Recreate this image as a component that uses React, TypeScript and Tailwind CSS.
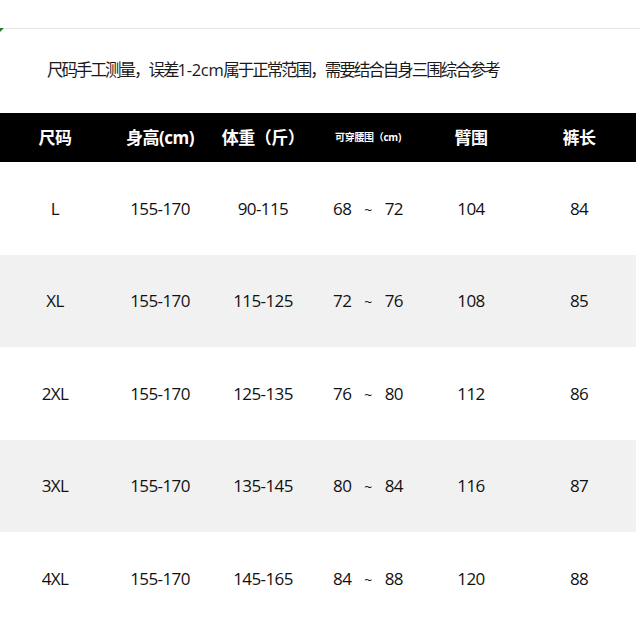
import React from 'react';

const rows = [
  { size: 'L', height: '155-170', weight: '90-115', waist: ['68', '72'], arm: '104', pants: '84' },
  { size: 'XL', height: '155-170', weight: '115-125', waist: ['72', '76'], arm: '108', pants: '85' },
  { size: '2XL', height: '155-170', weight: '125-135', waist: ['76', '80'], arm: '112', pants: '86' },
  { size: '3XL', height: '155-170', weight: '135-145', waist: ['80', '84'], arm: '116', pants: '87' },
  { size: '4XL', height: '155-170', weight: '145-165', waist: ['84', '88'], arm: '120', pants: '88' },
];

const font = { fontFamily: '"Open Sans", "Noto Sans CJK SC", sans-serif' };
const cols = 'grid grid-cols-[110px_100px_106px_104px_102px_114px]';

export default function App() {
  return (
    <div className="w-[640px] h-[640px] bg-white overflow-hidden text-[#111]" style={font}>
      <div className="h-[28px]" />
      <div className="flex items-start h-[4px]">
        <div className="w-0 h-0 border-t-[4px] border-t-[#2d7a2d] border-r-[4px] border-r-transparent" />
        <div className="flex-1 ml-[1px] h-[1px] bg-[#e6e6e6]" />
      </div>
      <div className="h-[81px] pl-[47px] pt-[28px] text-[16.5px] leading-[20px] text-[#1a1a1a] tracking-[-2px] whitespace-nowrap">
        尺码手工测量，误差<span className="tracking-[-0.3px]">1-2cm</span>属于正常范围，需要结合自身三围综合参考
      </div>
      <div className="w-[636px]">
        <div className={`${cols} h-[49px] bg-black text-white font-bold text-[17px] tracking-[-0.5px] items-center text-center`}>
          <div>尺码</div>
          <div>身高(cm)</div>
          <div>体重（斤）</div>
          <div className="text-[10px] tracking-[-0.3px]">可穿腰围（cm)</div>
          <div>臂围</div>
          <div>裤长</div>
        </div>
        {rows.map((r, i) => (
          <div
            key={r.size}
            className={`${cols} h-[92.6px] items-center text-center text-[17px] tracking-[-0.6px] ${i % 2 === 1 ? 'bg-[#f1f1f1]' : 'bg-white'}`}
          >
            <div>{r.size}</div>
            <div>{r.height}</div>
            <div>{r.weight}</div>
            <div className="flex justify-center items-baseline gap-[13px]">
              <span>{r.waist[0]}</span>
              <span className="text-[14px]">~</span>
              <span>{r.waist[1]}</span>
            </div>
            <div>{r.arm}</div>
            <div>{r.pants}</div>
          </div>
        ))}
      </div>
    </div>
  );
}
